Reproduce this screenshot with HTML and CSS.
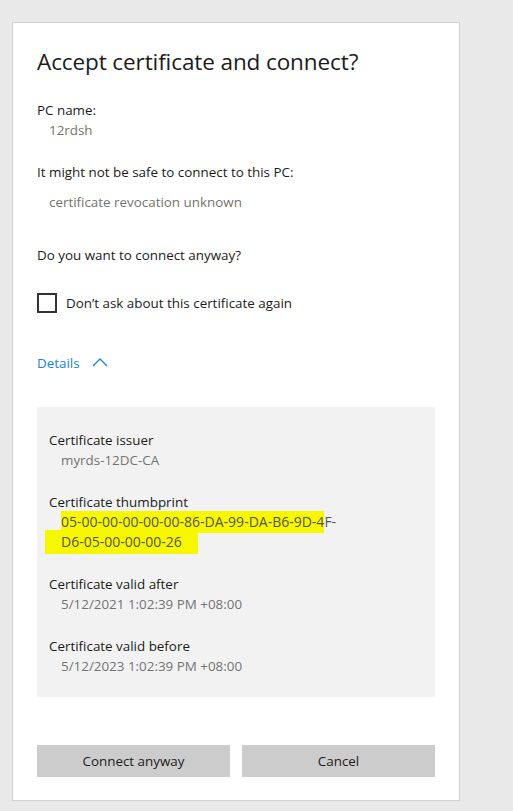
FILE: index.html
```html
<!DOCTYPE html>
<html lang="en">
<head>
  <meta charset="UTF-8" />
  <title>Accept certificate and connect?</title>
  <link rel="stylesheet" href="styles.css">
</head>
<body>

<div class="dialog">
  <h1 class="title">Accept certificate and connect?</h1>

  <div class="field">
    <div class="label">PC name:</div>
    <div class="value">12rdsh</div>
  </div>

  <div class="field warn">
    <div class="label">It might not be safe to connect to this PC:</div>
    <div class="value">certificate revocation unknown</div>
  </div>

  <p class="question">Do you want to connect anyway?</p>

  <label class="check">
    <span class="box"></span>
    <span>Don’t ask about this certificate again</span>
  </label>

  <div class="details-toggle">
    <span>Details</span>
    <svg width="16" height="10" viewBox="0 0 16 10"><path d="M1 9 L8 2 L15 9" fill="none" stroke="#1a86d9" stroke-width="1.3"/></svg>
  </div>

  <div class="details">
    <div class="item">
      <div class="label">Certificate issuer</div>
      <div class="value">myrds-12DC-CA</div>
    </div>
    <div class="item">
      <div class="label">Certificate thumbprint</div>
      <div class="value thumb">
        <span class="mark mark1">05-00-00-00-00-00-86-DA-99-DA-B6-9D-4</span>F-<br>
        <span class="mark mark2">D6-05-00-00-00-26</span>
      </div>
    </div>
    <div class="item">
      <div class="label">Certificate valid after</div>
      <div class="value">5/12/2021 1:02:39 PM +08:00</div>
    </div>
    <div class="item">
      <div class="label">Certificate valid before</div>
      <div class="value">5/12/2023 1:02:39 PM +08:00</div>
    </div>
  </div>

  <div class="buttons">
    <button class="btn">Connect anyway</button>
    <button class="btn">Cancel</button>
  </div>
</div>

</body>
</html>
```

FILE: styles.css
```css
body {
  margin: 0;
  background: #e9e9e9;
  font-family: "Open Sans", "Noto Sans", sans-serif;
  font-size: 13.4px;
  color: #1b1b1b;
}
.dialog {
  box-sizing: border-box;
  width: 448px;
  height: 779px;
  margin: 22px 0 0 12px;
  padding: 0 24px 0 24px;
  background: #fff;
  border: 1px solid #cfcfcf;
  display: flex;
  flex-direction: column;
}
.title {
  font-weight: 400;
  font-size: 22.5px;
  margin: 24px 0 0;
  line-height: 30px;
  letter-spacing: -0.1px;
}
.field {
  margin-top: 23px;
  line-height: 20px;
}
.value {
  color: #737373;
  padding-left: 12px;
}
.warn {
  margin-top: 22px;
}
.warn .value {
  margin-top: 10px;
}
.question {
  margin: 33px 0 0;
  line-height: 20px;
}
.check {
  display: flex;
  align-items: center;
  gap: 9px;
  margin-top: 28px;
  line-height: 20px;
}
.box {
  width: 16px;
  height: 16px;
  border: 2px solid #333;
}
.details-toggle {
  display: flex;
  align-items: center;
  gap: 12px;
  margin-top: 40px;
  color: #1a86d9;
  line-height: 20px;
}
.details-toggle svg {
  margin-top: -3px;
}
.details {
  margin-top: 34px;
  background: #f2f2f2;
  height: 290px;
  padding: 23px 12px 0;
  box-sizing: border-box;
}
.item {
  line-height: 20px;
  margin-bottom: 22px;
}
.thumb {
  color: #555;
  font-size: 14px;
}
.mark {
  background: #f7f700;
}
.mark1 {
  padding: 1px 0 2px;
}
.mark2 {
  margin-left: -16px;
  padding: 2px 16px 3px;
}
.buttons {
  display: grid;
  grid-template-columns: 1fr 1fr;
  gap: 12px;
  margin-top: 48px;
}
.btn {
  height: 32px;
  border: none;
  background: #cccccc;
  font-family: inherit;
  font-size: 13.4px;
  color: #1b1b1b;
}
```
